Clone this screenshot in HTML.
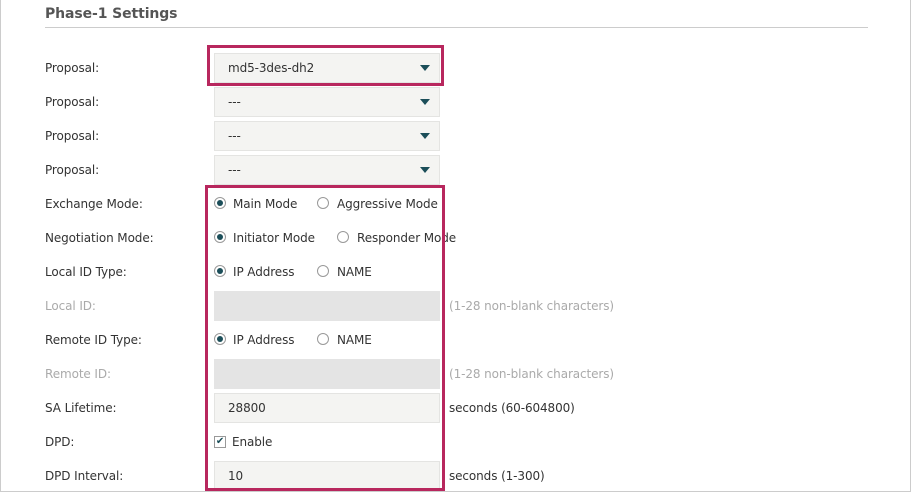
<!DOCTYPE html><html><head><style>
body{margin:0;width:911px;height:494px;background:#fff;font-family:Tahoma,"DejaVu Sans","Liberation Sans",sans-serif;font-size:12px;color:#333;position:relative;overflow:hidden;letter-spacing:-0.1px}
.frame{position:absolute;left:0;top:0;width:909px;height:491px;border:1px solid #ccc;border-top:none}
.a{position:absolute}
.lbl{position:absolute;left:45px;line-height:14px}
.sel,.inp{position:absolute;left:214px;width:224px;height:28px;background:#f4f4f2;border:1px solid #e4e4e2;box-sizing:content-box}
.sel span,.inp span{position:absolute;left:13px;top:7px}
.sel i{position:absolute;right:9px;top:11px;width:0;height:0;border-left:5px solid transparent;border-right:5px solid transparent;border-top:6px solid #1b4e59}
.dis{background:#e4e4e4;border-color:#e4e4e4}
.grey{color:#aaa}
.r{position:absolute;width:10px;height:10px;border:1px solid #999;border-radius:50%;background:#fff}
.r.on::after{content:"";position:absolute;left:2px;top:2px;width:6px;height:6px;border-radius:50%;background:#1b4e59}
.red{position:absolute;border:3px solid #b8275e}
</style></head><body>
<div class="frame"></div>
<div class="a" style="left:45px;top:6px;font-weight:bold;font-size:14px;color:#555">Phase-1 Settings</div>
<div class="a" style="left:45px;top:27px;width:823px;height:1px;background:#ccc"></div>

<div class="lbl" style="top:61px">Proposal:</div>
<div class="lbl" style="top:95px">Proposal:</div>
<div class="lbl" style="top:129px">Proposal:</div>
<div class="lbl" style="top:163px">Proposal:</div>
<div class="lbl" style="top:197px">Exchange Mode:</div>
<div class="lbl" style="top:231px">Negotiation Mode:</div>
<div class="lbl" style="top:265px">Local ID Type:</div>
<div class="lbl grey" style="top:299px">Local ID:</div>
<div class="lbl" style="top:333px">Remote ID Type:</div>
<div class="lbl grey" style="top:367px">Remote ID:</div>
<div class="lbl" style="top:401px">SA Lifetime:</div>
<div class="lbl" style="top:435px">DPD:</div>
<div class="lbl" style="top:469px">DPD Interval:</div>

<div class="sel" style="top:53px"><span>md5-3des-dh2</span><i></i></div>
<div class="sel" style="top:87px"><span>---</span><i></i></div>
<div class="sel" style="top:121px"><span>---</span><i></i></div>
<div class="sel" style="top:155px"><span>---</span><i></i></div>

<div class="r on" style="left:214px;top:197px"></div><div class="a" style="left:233px;top:197px">Main Mode</div>
<div class="r" style="left:317px;top:197px"></div><div class="a" style="left:337px;top:197px">Aggressive Mode</div>
<div class="r on" style="left:214px;top:231px"></div><div class="a" style="left:233px;top:231px">Initiator Mode</div>
<div class="r" style="left:337px;top:231px"></div><div class="a" style="left:357px;top:231px">Responder Mode</div>
<div class="r on" style="left:214px;top:265px"></div><div class="a" style="left:233px;top:265px">IP Address</div>
<div class="r" style="left:317px;top:265px"></div><div class="a" style="left:337px;top:265px">NAME</div>
<div class="inp dis" style="top:291px"></div><div class="a grey" style="left:449px;top:299px">(1-28 non-blank characters)</div>
<div class="r on" style="left:214px;top:333px"></div><div class="a" style="left:233px;top:333px">IP Address</div>
<div class="r" style="left:317px;top:333px"></div><div class="a" style="left:337px;top:333px">NAME</div>
<div class="inp dis" style="top:359px"></div><div class="a grey" style="left:449px;top:367px">(1-28 non-blank characters)</div>
<div class="inp" style="top:393px"><span>28800</span></div><div class="a" style="left:449px;top:401px">seconds (60-604800)</div>
<div class="a" style="left:214px;top:436px;width:10px;height:10px;border:1px solid #999;background:#fff;font-size:10px;line-height:10px;text-align:center;color:#1b4e59">✔</div><div class="a" style="left:232px;top:435px">Enable</div>
<div class="inp" style="top:461px"><span>10</span></div><div class="a" style="left:449px;top:469px">seconds (1-300)</div>

<div class="red" style="left:207px;top:45px;width:231px;height:35px"></div>
<div class="red" style="left:205px;top:185px;width:234px;height:300px"></div>
</body></html>
